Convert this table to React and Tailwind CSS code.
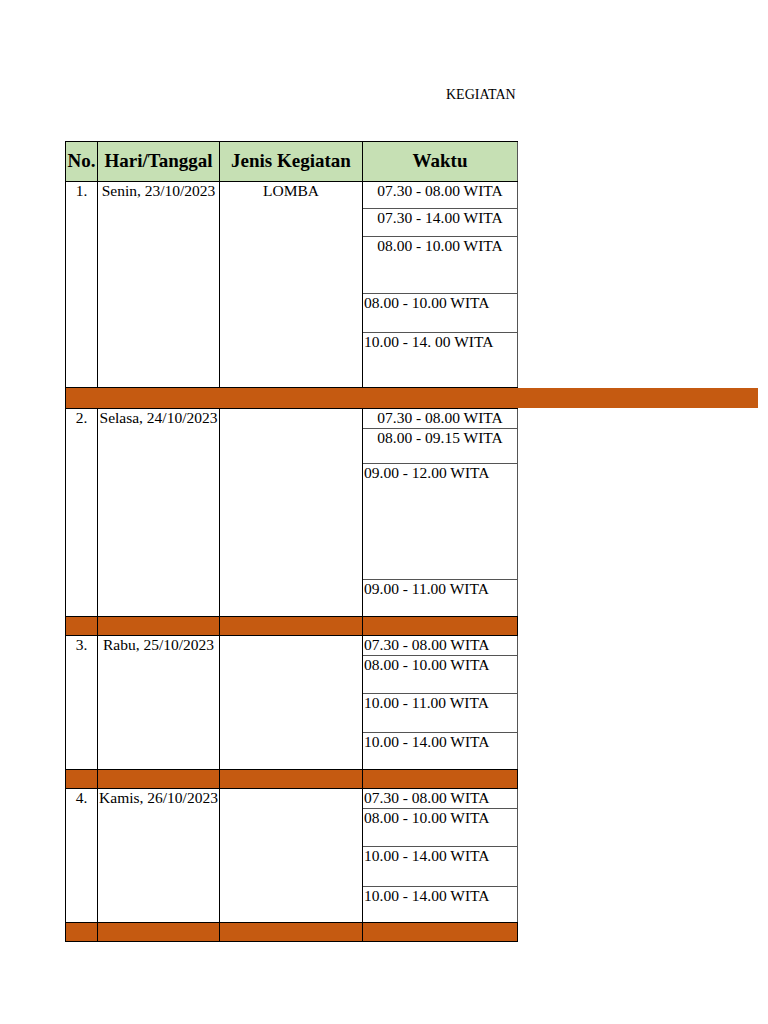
import React from "react";

const ORANGE = "bg-[#c55a11]";

function OrangeRow() {
  return (
    <div className={`flex h-[19px] w-[453px] border-l border-b border-black ${ORANGE}`}>
      <div className="w-[32px] border-r border-black" />
      <div className="w-[122px] border-r border-black" />
      <div className="w-[143px] border-r border-black" />
      <div className="w-[155px] border-r border-black" />
    </div>
  );
}

function Section({ no, day, kegiatan, rows, top, h }) {
  return (
    <div
      className={`flex w-[453px] border-l border-b border-black ${top ? "border-t" : ""}`}
      style={{ height: h }}
    >
      <div className="w-[32px] border-r border-black text-center leading-[18px]">{no}</div>
      <div className="w-[122px] border-r border-black text-center leading-[18px] whitespace-nowrap">{day}</div>
      <div className="w-[143px] border-r border-black text-center leading-[18px]">{kegiatan}</div>
      <div className="w-[155px] border-r border-[#555] flex flex-col">
        {rows.map((r, i) => (
          <div
            key={i}
            className={`leading-[18px] whitespace-nowrap ${i < rows.length - 1 ? "border-b border-[#555]" : ""} ${r.c ? "text-center" : "pl-[1px]"}`}
            style={{ height: r.h }}
          >
            {r.t}
          </div>
        ))}
      </div>
    </div>
  );
}

export default function App() {
  return (
    <div className="w-[768px] h-[1024px] bg-white text-black font-['Liberation_Serif',serif] text-[15.5px]">
      <div className="h-[141px] pt-[86px] pl-[446px]">
        <div className="whitespace-nowrap text-[14px] leading-[18px]">KEGIATAN</div>
      </div>
      <div className="ml-[65px]">
        <div className="flex h-[41px] w-[453px] border border-r-0 border-black bg-[#c6e0b4] text-[19px] font-bold">
          <div className="w-[32px] border-r border-black flex items-center justify-center whitespace-nowrap">No.</div>
          <div className="w-[122px] border-r border-black flex items-center justify-center whitespace-nowrap">Hari/Tanggal</div>
          <div className="w-[143px] border-r border-black flex items-center justify-center whitespace-nowrap">Jenis Kegiatan</div>
          <div className="w-[155px] border-r border-[#555] flex items-center justify-center">Waktu</div>
        </div>
        <Section
          no="1."
          day="Senin, 23/10/2023"
          kegiatan="LOMBA"
          h={206}
          rows={[
            { t: "07.30 - 08.00 WITA", h: 27, c: true },
            { t: "07.30 - 14.00 WITA", h: 28, c: true },
            { t: "08.00 - 10.00 WITA", h: 57, c: true },
            { t: "08.00 - 10.00 WITA", h: 39 },
            { t: "10.00 - 14. 00 WITA", h: 54 },
          ]}
        />
        <div className={`h-[20px] w-[693px] border-l border-black ${ORANGE}`} />
        <Section
          no="2."
          day="Selasa, 24/10/2023"
          kegiatan=""
          top
          h={209}
          rows={[
            { t: "07.30 - 08.00 WITA", h: 20, c: true },
            { t: "08.00 - 09.15 WITA", h: 35, c: true },
            { t: "09.00 - 12.00 WITA", h: 116 },
            { t: "09.00 - 11.00 WITA", h: 36 },
          ]}
        />
        <OrangeRow />
        <Section
          no="3."
          day="Rabu, 25/10/2023"
          kegiatan=""
          h={134}
          rows={[
            { t: "07.30 - 08.00 WITA", h: 20 },
            { t: "08.00 - 10.00 WITA", h: 38 },
            { t: "10.00 - 11.00 WITA", h: 39 },
            { t: "10.00 - 14.00 WITA", h: 36 },
          ]}
        />
        <OrangeRow />
        <Section
          no="4."
          day="Kamis, 26/10/2023"
          kegiatan=""
          h={134}
          rows={[
            { t: "07.30 - 08.00 WITA", h: 20 },
            { t: "08.00 - 10.00 WITA", h: 38 },
            { t: "10.00 - 14.00 WITA", h: 40 },
            { t: "10.00 - 14.00 WITA", h: 35 },
          ]}
        />
        <OrangeRow />
      </div>
    </div>
  );
}
